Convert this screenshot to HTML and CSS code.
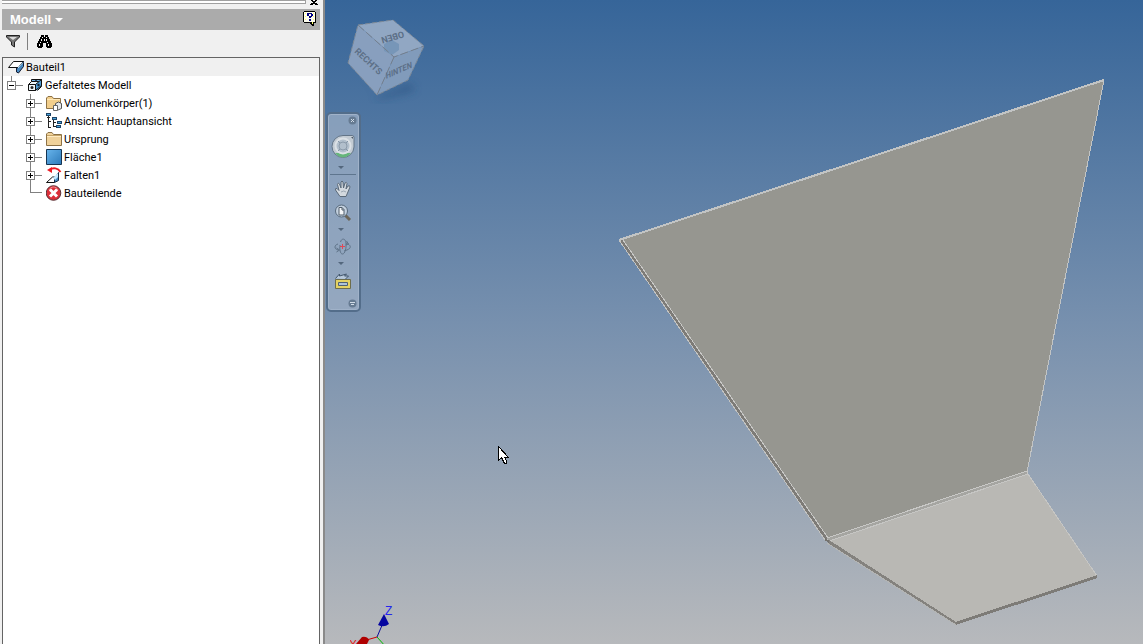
FILE: index.html
```html
<!DOCTYPE html>
<html lang="de">
<head>
    <meta charset="UTF-8">
    <title>Bauteil1</title>
    <link rel="stylesheet" href="styles.css">
</head>
<body>
    <aside class="browser">
        <div class="grip">
            <span class="grip-lines"></span>
            <button class="close" aria-label="Schließen">
                <svg width="8" height="5" shape-rendering="crispEdges"><path d="M1 0h2v1h2V0h2v1H6v1H5v1h2v1h1v1H5V4H3v1H0V4h1V3h2V2H2V1H1z" fill="#000"/></svg>
            </button>
        </div>
        <header class="title">
            <button class="title-menu">Modell
                <svg width="8" height="4"><path d="M0 0h8L4 4z" fill="#fff"/></svg>
            </button>
            <button class="help" aria-label="Hilfe">
                <svg width="14" height="15" shape-rendering="crispEdges">
                    <path d="M1 0h11v1h1v11h-2v3H9v-1H8v-1H7v-1H1v-1H0V1h1z" fill="#000"/>
                    <path d="M1 1h11v10h-2v2H9v-2H1z" fill="#fffff0"/>
                    <path d="M2 2h1v1H2zM10 2h1v1h-1zM2 5h1v1H2zM10 5h1v1h-1zM2 8h1v1H2zM10 8h1v1h-1zM9 11h1v2H9z" fill="#ff6"/>
                    <path d="M4 2h5v1h1v2H9v1H8v1H6V5h2V3H6v2H4zM6 8h2v2H6z" fill="#000080"/>
                </svg>
            </button>
        </header>
        <div class="tools">
            <button aria-label="Filter">
                <svg width="14" height="13"><path d="M.5.5h13v1.500L8.500 7v5l-3-2V7L.5 2z" fill="#777" stroke="#222"/><path d="M3 2h8L7 5z" fill="#ddd"/></svg>
            </button>
            <span class="divider"></span>
            <button aria-label="Suchen">
                <svg width="15" height="13" shape-rendering="crispEdges">
                    <path d="M4 0h3v2h1V0h3v2h1v2h1v2h1v2h1v4h-1v1h-4v-1H9V8H6v4H5v1H1v-1H0V8h1V6h1V4h1V2h1z" fill="#000"/>
                    <path d="M5 2h1v1H5zM9 2h1v1H9zM4 4h1v2H4zM9 4h1v2H9zM3 7h1v1H3zM10 7h1v1h-1zM2 9h1v2H2zM11 9h1v2h-1zM7 4h1v2H7z" fill="#fff"/>
                </svg>
            </button>
        </div>
        <nav class="tree">
            <div class="row root">
                <svg class="icon" viewBox="0 0 16 16"><path d="M5.500 2.500h10l-5 6H.5z" fill="#fff" stroke="#111"/><path d="M15.500 2.500v5l-5 6.500-2-1V9l2-.5z" fill="#4889c2" stroke="#111b31"/><path d="M10 9l5-5.500" stroke="#b7e2f7"/></svg>
                <span>Bauteil1</span>
            </div>
            <ul>
                <li>
                    <div class="row first">
                        <button class="toggle minus" aria-label="Zuklappen"></button><span class="dash"></span>
                        <svg class="icon" viewBox="0 0 16 16"><path d="M4.500 5V2.500h10v7l-4 4" fill="#6eb4e5" stroke="#111"/><path d="M1.500 7.500l3-3h7v6l-3 3h-7z" fill="#eef7fb" stroke="#111"/><path d="M1.500 7.500h7v6" fill="none" stroke="#111"/><path d="M8.500 7.500l6-5v6l-6 5z" fill="#4e9bd3" stroke="#111"/><circle cx="5" cy="10.500" r="1.500" fill="#222"/><circle cx="11.500" cy="8" r="1.200" fill="#123"/><circle cx="9" cy="4" r="1" fill="#123"/></svg>
                        <span>Gefaltetes Modell</span>
                    </div>
                    <ul>
                        <li class="row">
                            <button class="toggle" aria-label="Aufklappen"></button><span class="dash"></span>
                            <svg class="icon" viewBox="0 0 16 16"><path d="M.5 13.500V3L2 1.500h4L7.500 3.500h7v10z" fill="#f2ce8b" stroke="#8d7246"/><path d="M1 4.500h13" stroke="#ffe8b7"/><path d="M9.500 8.500l3-1.500 3 1.500v5L12 15l-2.500-1z" fill="#e5e7e9" stroke="#555"/><path d="M7.500 10.500h4v5h-4z" fill="#fff" stroke="#666"/></svg>
                            <span>Volumenkörper(1)</span>
                        </li>
                        <li class="row">
                            <button class="toggle" aria-label="Aufklappen"></button><span class="dash"></span>
                            <svg class="icon" viewBox="0 0 16 16" shape-rendering="crispEdges"><path d="M2.500 3v11h2M1 4.500h3M3 8.500h2M7.500 6v7h2M8 9.500h2" fill="none" stroke="#222"/><path d="M0 0h5v3H0zM6 4h5v3H6zM11 8h5v3h-5zM10 12h5v3h-5z" fill="#1d4467"/><path d="M1 1h3v1H1zM7 5h3v1H7zM12 9h3v1h-3zM11 13h3v1h-3z" fill="#4ba4da"/></svg>
                            <span>Ansicht: Hauptansicht</span>
                        </li>
                        <li class="row">
                            <button class="toggle" aria-label="Aufklappen"></button><span class="dash"></span>
                            <svg class="icon" viewBox="0 0 16 16"><path d="M.5 14.500V3L2 1.500h4L7.500 3.500h8v11z" fill="#f0d29b" stroke="#8d7246"/><path d="M1 4.500h14" stroke="#c5a366"/><path d="M1 5.500h14" stroke="#ffebc2"/></svg>
                            <span>Ursprung</span>
                        </li>
                        <li class="row">
                            <button class="toggle" aria-label="Aufklappen"></button><span class="dash"></span>
                            <svg class="icon" viewBox="0 0 16 16">
                                <defs><linearGradient id="sheet" x1="0" y1="0" x2="1" y2="1"><stop stop-color="#68b5ec"/><stop offset="1" stop-color="#2d79b9"/></linearGradient></defs>
                                <path d="M.5.5h15v15H.5z" fill="url(#sheet)" stroke="#153452"/>
                            </svg>
                            <span>Fläche1</span>
                        </li>
                        <li class="row">
                            <button class="toggle" aria-label="Aufklappen"></button><span class="dash"></span>
                            <svg class="icon" viewBox="0 0 16 16"><path d="M.5 15.500L6.500 10h5l-3 5.500z" fill="#fff" stroke="#111"/><path d="M8.500 15.500V12l4-6.500v8z" fill="#4c8ec4" stroke="#172b43"/><path d="M7 11l5-5v4l-3 3z" fill="#c4e9ff"/><path d="M4 3c3-3 8-2 10.500 2" fill="none" stroke="#ed1c24" stroke-width="2"/><path d="M1 3l5-3v6z" fill="#ed1c24"/></svg>
                            <span>Falten1</span>
                        </li>
                        <li class="row last">
                            <svg class="icon" viewBox="0 0 16 16"><circle cx="7.500" cy="8" r="7.300" fill="#dc2f39" stroke="#5b3438"/><path d="M3 5c2-4 7-4 9 0" stroke="#f58a8e" fill="none"/><path d="M4 4.500l7 7M11 4.500l-7 7" stroke="#fff" stroke-width="3"/></svg>
                            <span>Bauteilende</span>
                        </li>
                    </ul>
                </li>
            </ul>
        </nav>
    </aside>

    <main class="viewport">
        <svg class="scene" viewBox="325 0 818 644" preserveAspectRatio="xMinYMin slice" shape-rendering="crispEdges">
            <!-- sheet edge, large face -->
            <path d="M619 240l4-1 206 300-4 1z" fill="#7d7b77" stroke="#c2c2c0"/>
            <path d="M623 239L1104 80l-77 391-199 67z" fill="#969690"/>
            <path d="M623 240l205 298" stroke="#c8c8c6" fill="none"/>
            <path d="M619 240L1104 80" stroke="#c2c4c4" stroke-width="2" fill="none"/>
            <path d="M1104 80l-77 392" stroke="#c2c4c4" fill="none"/>
            <!-- bend -->
            <path d="M827 538l200-67 1 5-198 67z" fill="#a5a5a1"/>
            <path d="M827 538l200-67v3" stroke="#c8c8c6" fill="none"/>
            <!-- flange -->
            <path d="M829 541l199-67 69 102-141 47z" fill="#b9b8b4"/>
            <path d="M829 541l199-67 69 102" stroke="#c6c6c4" fill="none"/>
            <path d="M829 540l127 82v3L828 544z" fill="#84827e"/>
            <path d="M827 543l129 82" stroke="#b4b5b4" fill="none"/>
            <path d="M956 622l141-47v3l-141 47z" fill="#7d7b77"/>
            <path d="M825 539l4 3" stroke="#74726e" stroke-width="2"/>
            <!-- pointer -->
            <path d="M498.500 446.500v14l3-3 3 6h2v-3l-2-3h4z" fill="#fff" stroke="#000"/>
        </svg>

        <svg class="cube" viewBox="0 0 100 95">
            <defs><filter id="soft"><feGaussianBlur stdDeviation="4"/></filter></defs>
            <path d="M10 54l31 34 35-14 4 6-37 10z" fill="#234d7d" opacity=".6" filter="url(#soft)"/>
            <path d="M23 15l35-5 31 26-30 11z" fill="#91a7c3"/>
            <path d="M23 15l36 32-17 38-29-32z" fill="#889fbe"/>
            <path d="M59 47l30-11-16 34-31 15z" fill="#819bbb"/>
            <path d="M49 34l8-4 7 4v6l-7 5-8-4z" fill="#7796b8"/>
            <path d="M23 15l36 32 30-11M59 47L42 85" fill="none" stroke="#747f8d" stroke-dasharray="8 3"/>
            <path d="M23 15l35-5 31 26-16 34-31 15-29-32z" fill="none" stroke="#7d8997" stroke-dasharray="5 2"/>
            <text class="face" transform="translate(68 21) rotate(164)">OBEN</text>
            <text class="face" transform="translate(19 42) rotate(43)">RECHTS</text>
            <text class="face back" transform="translate(51 69) rotate(-24) skewX(-20)">HINTEN</text>
        </svg>

        <div class="navbar">
            <button class="small" aria-label="Schließen"><svg width="9" height="9"><circle cx="4.500" cy="4.500" r="4" fill="#667b92"/><path d="M3 3l3 3M6 3L3 6" stroke="#d2dce7"/></svg></button>
            <button class="wheel" aria-label="Navigationsrad">
                <svg width="26" height="26"><path d="M13 1.500h9q2 0 2 2V13a11 11 0 1 1-11-11.500z" fill="#c3cbd3" stroke="#637588"/><path d="M5 19h16q-8 9-16 0z" fill="#65b67b"/><circle cx="13" cy="12" r="7.500" fill="#b2bfcc" stroke="#dce1e6" stroke-width="2"/><circle cx="13" cy="12" r="4" fill="none" stroke="#8c9bab"/><path d="M8 7l2 2M18 7l-2 2M8 17l2-2M18 17l-2-2" stroke="#8797a8"/><path d="M21 3h2v2z" fill="#4e5b68"/></svg>
            </button>
            <button class="more" aria-label="Radoptionen"><svg width="6" height="3"><path d="M0 0h6L3 3z"/></svg></button>
            <hr>
            <button class="tool" aria-label="Pan">
                <svg width="18" height="18"><path d="M6 16.500L1.500 10Q1 8 3 8.500l2 2-1.500-6Q4 2 5.500 4L7 8 7 2q1-2 2 0l.5 6L11 3q1.500-1.500 2 .5L12 9l2-3q2-1 2 1l-2.500 6-1.500 3.500z" fill="#d3d9df" stroke="#5b6a79"/><path d="M7 12q3-2 5 0" fill="none" stroke="#9ca8b4"/></svg>
            </button>
            <button class="tool zoom" aria-label="Zoom">
                <svg width="18" height="18"><path d="M11 11l5 5" stroke="#6c6659" stroke-width="3"/><circle cx="7.500" cy="7" r="6" fill="#c3d0de" stroke="#56687b"/><path d="M5 3.500h3l2 2V11H5z" fill="#f4f6f8" stroke="#4f5d6b"/><path d="M8 3.500V6h2" fill="none" stroke="#4f5d6b"/></svg>
            </button>
            <button class="more" aria-label="Zoomoptionen"><svg width="6" height="3"><path d="M0 0h6L3 3z"/></svg></button>
            <button class="tool" aria-label="Orbit">
                <svg width="18" height="18" fill="none" stroke="#5f7389"><path d="M6.500 4c1-4 5-4 5.500 1s-1 11-3.500 11-3-5-2.500-9M4 6C0 7 0 11 4 12M12 5c5 2 6 5 1 7l-3 1M2.500 10l3 2-3 2M12.500 3l2 3-3 1"/><path d="M8.500 6v5M6 8.500h5" stroke="#df4857"/></svg>
            </button>
            <button class="more" aria-label="Orbitoptionen"><svg width="6" height="3"><path d="M0 0h6L3 3z"/></svg></button>
            <button class="tool" aria-label="Ausrichten nach">
                <svg width="18" height="18"><path d="M1.500 6.500L5.500 2v2l7-2-2 2h4l-3 3" fill="#b7c8da" stroke="#42566c"/><path d="M1.500 7.500h15v9h-15z" fill="#e4d263" stroke="#6e6d4c"/><path d="M4.500 10.500h9v3h-9z" fill="#aec3d8" stroke="#4e6174"/></svg>
            </button>
            <button class="small options" aria-label="Anpassen"><svg width="9" height="9"><circle cx="4.500" cy="4.500" r="4" fill="#667b92"/><path d="M2 3.500h5M3 5.500h3" stroke="#d2dce7"/></svg></button>
        </div>

        <svg class="triad" viewBox="0 0 60 44">
            <path d="M27 37l6-14" stroke="#0a0a9a"/>
            <path d="M27 37L13 41" stroke="#c00"/>
            <path d="M27 37l9 10" stroke="#0b0"/>
            <path d="M34 14l5 10q-5 4-11 1z" fill="#0505a0"/>
            <path d="M6 44l6-7q5-1 7 3l-2 4z" fill="#b00000"/>
            <text x="35" y="15" class="z">Z</text>
            <text x="-1" y="49" class="x">X</text>
        </svg>
    </main>
</body>
</html>
```
FILE: styles.css
```css
body {
    margin: 0;
    display: grid;
    grid-template-columns: 325px 1fr;
    height: 100vh;
    overflow: hidden;
    font-family: Tahoma, Roboto, "Liberation Sans", sans-serif;
    font-size: 11px;
    color: #000;
}

button {
    padding: 0;
    border: none;
    background: none;
    font: inherit;
    color: inherit;
    display: flex;
    align-items: center;
    justify-content: center;
}

svg {
    display: block;
    flex: none;
}

ul {
    list-style: none;
    margin: 0;
    padding: 0;
}

/* model browser */
.browser {
    box-sizing: border-box;
    display: flex;
    flex-direction: column;
    min-height: 0;
    padding: 0 3px 0 2px;
    background: #f0f0f0;
    border-right: 2px solid #8a8a8a;
}

.grip {
    display: flex;
    justify-content: space-between;
    align-items: flex-start;
    height: 9px;
    padding-right: 2px;
}

.grip-lines {
    flex: 1;
    height: 2px;
    margin-right: 4px;
    border: 1px solid #a0a0a0;
    border-left: none;
    background: #fff;
}

.title {
    display: flex;
    justify-content: space-between;
    align-items: center;
    height: 21px;
    padding: 0 3px 0 8px;
    background: #ababab;
}

.title-menu {
    gap: 4px;
    font-family: Tahoma, "Liberation Sans", sans-serif;
    font-size: 13px;
    font-weight: bold;
    color: #fff;
}

.help {
    margin-bottom: 2px;
}

.tools {
    display: flex;
    align-items: center;
    gap: 7px;
    height: 23px;
    padding: 0 4px 4px;
}

.tools .divider {
    width: 1px;
    height: 17px;
    margin: 0 2px 0 0;
    background: #808080;
}

.tree {
    flex: 1;
    border: 1px solid #646464;
    border-bottom: none;
    background: #fff;
}

.row {
    display: flex;
    align-items: center;
    height: 18px;
    white-space: nowrap;
}

.icon {
    width: 16px;
    height: 16px;
    margin-right: 2px;
}

.root {
    padding-left: 5px;
    background: #f0f0f0;
}

.tree > ul {
    padding-left: 4px;
}

.tree ul ul {
    padding-left: 19px;
}

/* connecting line down the left of the rows */
.tree li.row,
.first {
    background: linear-gradient(#808080, #808080) 4px 0 / 1px 100% no-repeat;
}

.tree .first {
    background-size: 1px 9px;
}

.tree li.last {
    padding-left: 20px;
    background:
        linear-gradient(#808080, #808080) 4px 0 / 1px 9px no-repeat,
        linear-gradient(#808080, #808080) 4px 8px / 12px 1px no-repeat;
}

.toggle {
    width: 9px;
    height: 9px;
    border: 1px solid #808080;
    background:
        linear-gradient(#000, #000) center / 5px 1px no-repeat,
        linear-gradient(#000, #000) center / 1px 5px no-repeat,
        #fff;
}

.toggle.minus {
    background:
        linear-gradient(#000, #000) center / 5px 1px no-repeat,
        #fff;
}

.dash {
    width: 7px;
    height: 1px;
    margin-right: 4px;
    background: #808080;
}

/* graphics window */
.viewport {
    position: relative;
    overflow: hidden;
    background: linear-gradient(#366599, #7790ae 50%, #b7b9bc);
}

.scene {
    width: 100%;
    height: 100%;
}

.cube {
    position: absolute;
    top: 10px;
    left: 10px;
    width: 100px;
}

.face {
    font-family: Roboto, "Liberation Sans", sans-serif;
    font-size: 9px;
    font-weight: bold;
    fill: #5c6f87;
}

.face.back {
    font-size: 8px;
}

.navbar {
    position: absolute;
    top: 112px;
    left: 1px;
    box-sizing: border-box;
    width: 35px;
    display: flex;
    flex-direction: column;
    align-items: center;
    padding: 1px 1px 2px 0;
    border: 2px solid #536d8a;
    border-radius: 5px;
    background: rgba(166, 181, 201, 0.65);
    box-shadow: inset 0 0 0 1px #a0b2c9;
}

.navbar .small {
    align-self: flex-end;
    height: 10px;
    margin-right: 1px;
}

.wheel {
    margin: 9px 0 4px;
}

.more {
    height: 7px;
    margin-right: 4px;
}

.more svg {
    fill: #53677d;
}

.navbar hr {
    align-self: stretch;
    margin: 3px 2px 5px;
    border: none;
    border-top: 1px solid #5e758e;
}

.tool {
    height: 18px;
    margin: 0 0 4px;
}

.more + .tool {
    margin-top: 5px;
}

.zoom {
    margin-top: 2px;
}

.navbar .options {
    margin-top: 4px;
}

.triad {
    position: absolute;
    left: 25px;
    bottom: 0;
    width: 60px;
}

.triad text {
    font-family: "Liberation Sans", sans-serif;
    font-size: 12px;
}

.z {
    fill: #2424f0;
}

.x {
    fill: #e02020;
}
```
